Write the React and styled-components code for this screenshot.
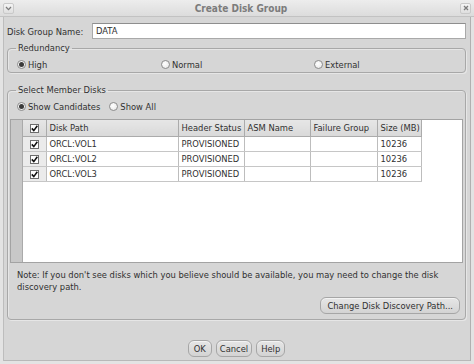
import React from "react";
import styled, { createGlobalStyle } from "styled-components";

const GlobalStyle = createGlobalStyle`
  html, body {
    margin: 0;
    padding: 0;
    background: #d6d6d6;
  }
  body {
    font-family: "DejaVu Sans Condensed", "Liberation Sans", sans-serif;
    font-size: 9.3px;
    color: #303030;
  }
`;

const Window = styled.div`
  width: 474px;
  height: 364px;
  box-sizing: border-box;
  display: flex;
  flex-direction: column;
  background: #e3e3e3;
  overflow: hidden;
`;

const TitleBar = styled.div`
  height: 17px;
  box-sizing: border-box;
  display: flex;
  align-items: center;
  justify-content: space-between;
  padding: 0 3px 0 3px;
  background: linear-gradient(#ededed, #dcdcdc);
  border-bottom: 1px solid #c2c2c2;
`;

const Title = styled.div`
  flex: 1;
  text-align: center;
  font-weight: bold;
  font-size: 10px;
  color: #7c7c7c;
  padding-left: 8px;
`;

const TitleButton = styled.div`
  width: 11px;
  height: 11px;
  box-sizing: border-box;
  display: flex;
  align-items: center;
  justify-content: center;
  border: 1px solid #c9c9c9;
  border-radius: 2px;
  background: linear-gradient(#f4f4f4, #dedede);
`;

const Body = styled.div`
  flex: 1;
  margin: 0 3px 3px 3px;
  padding: 6px 4px 0 3px;
  border-left: 1px solid #bdbdbd;
  border-right: 1px solid #b0b0b0;
  border-bottom: 1px solid #b8b8b8;
  background: #d6d6d6;
  display: flex;
  flex-direction: column;
`;

const NameRow = styled.div`
  display: flex;
  align-items: center;
  height: 16px;
`;

const Label = styled.label`
  width: 85px;
  white-space: nowrap;
`;

const TextInput = styled.div`
  flex: 1;
  height: 16px;
  box-sizing: border-box;
  background: #fff;
  border: 1px solid #a9a9a9;
  border-top-color: #8e8e8e;
  padding: 0 3px;
  line-height: 14px;
`;

const Group = styled.fieldset`
  margin: ${(p) => p.$top}px 0 0 0;
  padding: 4px 2px ${(p) => p.$bottom}px 2px;
  min-width: 0;
  border: 1px solid #a8a8a8;
  border-radius: 4px;
  box-shadow: inset 1px 1px 0 #e6e6e6, 1px 1px 0 #e6e6e6;
`;

const Legend = styled.legend`
  margin-left: 6px;
  padding: 0 2px;
  line-height: 12px;
  height: 12px;
`;

const RadioGrid = styled.div`
  display: grid;
  grid-template-columns: 144px 153px 1fr;
  padding-left: 7px;
  height: 12px;
  align-items: center;
`;

const RadioRow = styled.div`
  display: flex;
  align-items: center;
  gap: 9px;
  padding-left: 7px;
  height: 12px;
`;

const RadioOption = styled.div`
  display: flex;
  align-items: center;
  gap: 2px;
  white-space: nowrap;
`;

const RadioCircle = styled.span`
  width: 9px;
  height: 9px;
  box-sizing: border-box;
  border-radius: 50%;
  border: 1px solid #8c8c8c;
  background: radial-gradient(circle at 40% 40%, #ffffff, #e4e4e4);
  display: flex;
  align-items: center;
  justify-content: center;

  &::after {
    content: "";
    width: 5px;
    height: 5px;
    border-radius: 50%;
    background: ${(p) => (p.$checked ? "#3a3a3a" : "transparent")};
  }
`;

const Pane = styled.div`
  margin-top: 7px;
  height: 144px;
  box-sizing: border-box;
  border: 1px solid #a3a3a3;
  display: flex;
  background: #fff;
`;

const RowStrip = styled.div`
  width: 11px;
  background: #c8c8c8;
  border-right: 1px solid #aaaaaa;
`;

const Viewport = styled.div`
  flex: 1;
  background: #fff;
`;

const Table = styled.table`
  border-collapse: collapse;
  table-layout: fixed;
  width: 398px;
`;

const HeadCell = styled.th`
  width: ${(p) => p.$w}px;
  height: 16px;
  box-sizing: border-box;
  padding: 0 3px;
  font-weight: normal;
  text-align: ${(p) => (p.$center ? "center" : "left")};
  background: linear-gradient(#e6e6e6, #d9d9d9);
  border-right: 1px solid #ababab;
  border-bottom: 1px solid #ababab;
  white-space: nowrap;
  overflow: hidden;
  vertical-align: middle;
`;

const Cell = styled.td`
  height: 15px;
  box-sizing: border-box;
  padding: 0 3px;
  text-align: ${(p) => (p.$center ? "center" : "left")};
  background: ${(p) => (p.$shade ? "#ebebeb" : "#fff")};
  border-right: 1px solid #bdbdbd;
  border-bottom: 1px solid #c6c6c6;
  white-space: nowrap;
  overflow: hidden;
  vertical-align: middle;
`;

const CheckBox = styled.span`
  display: inline-flex;
  width: 9px;
  height: 9px;
  box-sizing: border-box;
  border: 1px solid #6d6d6d;
  background: #fff;
  align-items: center;
  justify-content: center;
  vertical-align: middle;
`;

const Note = styled.div`
  margin: 6px 0 0 7px;
  line-height: 12px;
  white-space: nowrap;
`;

const ButtonRow = styled.div`
  display: flex;
  justify-content: ${(p) => p.$align || "center"};
  gap: 4px;
  margin-top: ${(p) => p.$top || 0}px;
  padding-right: ${(p) => p.$right || 0}px;
`;

const Button = styled.div`
  height: 17px;
  box-sizing: border-box;
  padding: 0 ${(p) => p.$pad || 4}px;
  display: flex;
  align-items: center;
  border: 1px solid #a6a6a6;
  border-radius: 6px;
  background: linear-gradient(#e6e6e6, #d3d3d3);
  box-shadow: inset 0 1px 0 #f3f3f3;
  white-space: nowrap;
`;

const columns = [
  { key: "check", label: "", w: 23, center: true },
  { key: "path", label: "Disk Path", w: 132 },
  { key: "status", label: "Header Status", w: 66 },
  { key: "asm", label: "ASM Name", w: 66 },
  { key: "fail", label: "Failure Group", w: 67 },
  { key: "size", label: "Size (MB)", w: 44 },
];

const disks = [
  { path: "ORCL:VOL1", status: "PROVISIONED", size: "10236" },
  { path: "ORCL:VOL2", status: "PROVISIONED", size: "10236" },
  { path: "ORCL:VOL3", status: "PROVISIONED", size: "10236" },
];

const Check = () => (
  <CheckBox>
    <svg width="7" height="7" viewBox="0 0 7 7">
      <path d="M0.8 3.4 L2.8 5.6 L6.3 0.8" fill="none" stroke="#111" strokeWidth="1.6" />
    </svg>
  </CheckBox>
);

const Radio = ({ checked, children }) => (
  <RadioOption>
    <RadioCircle $checked={checked} />
    {children}
  </RadioOption>
);

const App = () => (
  <>
    <GlobalStyle />
    <Window>
      <TitleBar>
        <TitleButton>
          <svg width="7" height="5" viewBox="0 0 7 5">
            <path d="M1 1 L3.5 3.6 L6 1" fill="none" stroke="#7a7a7a" strokeWidth="1.3" />
          </svg>
        </TitleButton>
        <Title>Create Disk Group</Title>
        <TitleButton>
          <svg width="6" height="6" viewBox="0 0 6 6">
            <path d="M1 1 L5 5 M5 1 L1 5" stroke="#7a7a7a" strokeWidth="1.3" />
          </svg>
        </TitleButton>
      </TitleBar>

      <Body>
        <NameRow>
          <Label>Disk Group Name:</Label>
          <TextInput>DATA</TextInput>
        </NameRow>

        <Group $top={3} $bottom={2}>
          <Legend>Redundancy</Legend>
          <RadioGrid>
            <Radio checked>High</Radio>
            <Radio>Normal</Radio>
            <Radio>External</Radio>
          </RadioGrid>
        </Group>

        <Group $top={11} $bottom={5}>
          <Legend>Select Member Disks</Legend>
          <RadioRow>
            <Radio checked>Show Candidates</Radio>
            <Radio>Show All</Radio>
          </RadioRow>

          <Pane>
            <RowStrip />
            <Viewport>
              <Table>
                <thead>
                  <tr>
                    {columns.map((c) => (
                      <HeadCell key={c.key} $w={c.w} $center={c.center}>
                        {c.key === "check" ? <Check /> : c.label}
                      </HeadCell>
                    ))}
                  </tr>
                </thead>
                <tbody>
                  {disks.map((d) => (
                    <tr key={d.path}>
                      <Cell $center $shade>
                        <Check />
                      </Cell>
                      <Cell>{d.path}</Cell>
                      <Cell>{d.status}</Cell>
                      <Cell />
                      <Cell />
                      <Cell>{d.size}</Cell>
                    </tr>
                  ))}
                </tbody>
              </Table>
            </Viewport>
          </Pane>

          <Note>
            Note: If you don't see disks which you believe should be available, you may need to change the disk
            <br />
            discovery path.
          </Note>

          <ButtonRow $align="flex-end" $top={4} $right={3}>
            <Button $pad={6}>Change Disk Discovery Path...</Button>
          </ButtonRow>
        </Group>

        <ButtonRow $top={20}>
          <Button $pad={5}>OK</Button>
          <Button $pad={3}>Cancel</Button>
          <Button $pad={4}>Help</Button>
        </ButtonRow>
      </Body>
    </Window>
  </>
);

export default App;
